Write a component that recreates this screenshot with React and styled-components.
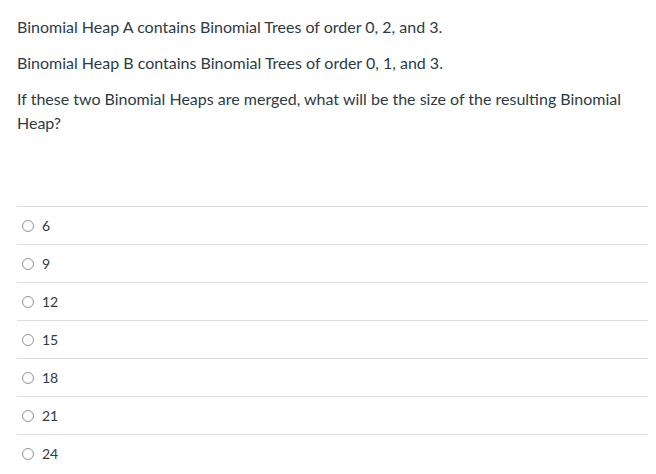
import React from "react";
import styled, { createGlobalStyle } from "styled-components";

const GlobalStyle = createGlobalStyle`
  body {
    margin: 0;
    background: #ffffff;
    font-family: Lato, "Liberation Sans", sans-serif;
    color: #2d3b45;
  }
`;

const Page = styled.div`
  padding: 15px 8px 0 17px;
`;

const Question = styled.div`
  font-size: 16px;
  line-height: 24px;
  p {
    margin: 0 0 12px 0;
  }
  p:last-child {
    margin-bottom: 0;
  }
`;

const Answers = styled.div`
  margin-top: 71px;
  border-top: 1px solid #dcdfe1;
`;

const Row = styled.label`
  display: flex;
  align-items: center;
  height: 37px;
  border-bottom: 1px solid #dcdfe1;
  padding-left: 5px;
  font-size: 14px;
  &:last-child {
    border-bottom: none;
  }
`;

const Radio = styled.span`
  width: 10px;
  height: 10px;
  border-radius: 50%;
  border: 1px solid #8f9498;
  margin-right: 8px;
  flex: none;
`;

const answers = [6, 9, 12, 15, 18, 21, 24];

export default function App() {
  return (
    <>
      <GlobalStyle />
      <Page>
        <Question>
          <p>Binomial Heap A contains Binomial Trees of order 0, 2, and 3.</p>
          <p>Binomial Heap B contains Binomial Trees of order 0, 1, and 3.</p>
          <p>
            If these two Binomial Heaps are merged, what will be the size of the resulting Binomial
            Heap?
          </p>
        </Question>
        <Answers>
          {answers.map((a) => (
            <Row key={a}>
              <Radio />
              {a}
            </Row>
          ))}
        </Answers>
      </Page>
    </>
  );
}
